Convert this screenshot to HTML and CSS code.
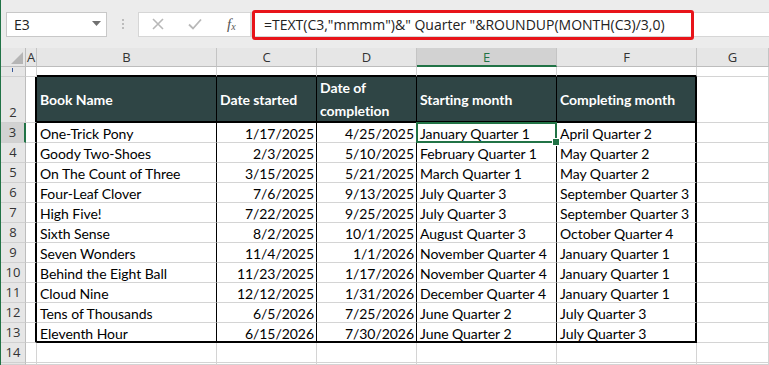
FILE: index.html
```html
<!DOCTYPE html>
<html>
<head>
<meta charset="utf-8">
<link rel="stylesheet" href="styles.css">
</head>
<body>
<div class="page">
  <div class="toolbar">
    <div class="namebox"><span class="nb-text">E3</span><svg class="nb-arrow" width="9" height="5" viewBox="0 0 9 5"><path d="M0 0h9L4.5 5z" fill="#707070"/></svg></div>
    <div class="dots"><span></span><span></span><span></span></div>
    <div class="fxbox">
      <svg class="ico" width="12" height="12" viewBox="0 0 12 12"><path d="M1 1l10 10M11 1L1 11" stroke="#b8b8b8" stroke-width="1.6" fill="none"/></svg>
      <svg class="ico" width="14" height="12" viewBox="0 0 14 12"><path d="M1 6.5l4 4L13 1.5" stroke="#b8b8b8" stroke-width="1.8" fill="none"/></svg>
      <span class="fx">f<sub>x</sub></span>
    </div>
    <div class="formula"><div class="redbox">=TEXT(C3,"mmmm")&amp;" Quarter "&amp;ROUNDUP(MONTH(C3)/3,0)</div></div>
  </div>
  <div class="sheet">
    <div class="corner"><svg width="12" height="12" viewBox="0 0 12 12"><path d="M12 0V12H0z" fill="#b5b5b5"/></svg></div>
    <div class="ch">A</div><div class="ch">B</div><div class="ch">C</div><div class="ch">D</div><div class="ch sel">E</div><div class="ch">F</div><div class="ch">G</div>

    <div class="rh r1"><span class="tick"></span></div><div class="c"></div><div class="c tt"></div><div class="c tt"></div><div class="c tt"></div><div class="c tt"></div><div class="c tt"></div><div class="c"></div>

    <div class="rh">2</div><div class="c tl"></div><div class="c hd">Book Name</div><div class="c hd">Date started</div><div class="c hd wrap">Date of completion</div><div class="c hd">Starting month</div><div class="c hd last">Completing month</div><div class="c"></div>

    <div class="rh rsel">3</div><div class="c tl"></div><div class="c d">One-Trick Pony</div><div class="c d num">1/17/2025</div><div class="c d num">4/25/2025</div><div class="c d active">January Quarter 1</div><div class="c d last">April Quarter 2</div><div class="c"></div>
    <div class="rh">4</div><div class="c tl"></div><div class="c d">Goody Two-Shoes</div><div class="c d num">2/3/2025</div><div class="c d num">5/10/2025</div><div class="c d">February Quarter 1</div><div class="c d last">May Quarter 2</div><div class="c"></div>
    <div class="rh">5</div><div class="c tl"></div><div class="c d">On The Count of Three</div><div class="c d num">3/15/2025</div><div class="c d num">5/21/2025</div><div class="c d">March Quarter 1</div><div class="c d last">May Quarter 2</div><div class="c"></div>
    <div class="rh">6</div><div class="c tl"></div><div class="c d">Four-Leaf Clover</div><div class="c d num">7/6/2025</div><div class="c d num">9/13/2025</div><div class="c d">July Quarter 3</div><div class="c d last">September Quarter 3</div><div class="c"></div>
    <div class="rh">7</div><div class="c tl"></div><div class="c d">High Five!</div><div class="c d num">7/22/2025</div><div class="c d num">9/25/2025</div><div class="c d">July Quarter 3</div><div class="c d last">September Quarter 3</div><div class="c"></div>
    <div class="rh">8</div><div class="c tl"></div><div class="c d">Sixth Sense</div><div class="c d num">8/2/2025</div><div class="c d num">10/1/2025</div><div class="c d">August Quarter 3</div><div class="c d last">October Quarter 4</div><div class="c"></div>
    <div class="rh">9</div><div class="c tl"></div><div class="c d">Seven Wonders</div><div class="c d num">11/4/2025</div><div class="c d num">1/1/2026</div><div class="c d">November Quarter 4</div><div class="c d last">January Quarter 1</div><div class="c"></div>
    <div class="rh">10</div><div class="c tl"></div><div class="c d">Behind the Eight Ball</div><div class="c d num">11/23/2025</div><div class="c d num">1/17/2026</div><div class="c d">November Quarter 4</div><div class="c d last">January Quarter 1</div><div class="c"></div>
    <div class="rh">11</div><div class="c tl"></div><div class="c d">Cloud Nine</div><div class="c d num">12/12/2025</div><div class="c d num">1/31/2026</div><div class="c d">December Quarter 4</div><div class="c d last">January Quarter 1</div><div class="c"></div>
    <div class="rh">12</div><div class="c tl"></div><div class="c d">Tens of Thousands</div><div class="c d num">6/5/2026</div><div class="c d num">7/25/2026</div><div class="c d">June Quarter 2</div><div class="c d last">July Quarter 3</div><div class="c"></div>
    <div class="rh">13</div><div class="c tl"></div><div class="c d bt">Eleventh Hour</div><div class="c d bt num">6/15/2026</div><div class="c d bt num">7/30/2026</div><div class="c d bt">June Quarter 2</div><div class="c d bt last">July Quarter 3</div><div class="c"></div>
    <div class="rh">14</div><div class="c"></div><div class="c"></div><div class="c"></div><div class="c"></div><div class="c"></div><div class="c"></div><div class="c"></div>
    <div class="rh"></div><div class="c"></div><div class="c"></div><div class="c"></div><div class="c"></div><div class="c"></div><div class="c"></div><div class="c"></div>
  </div>
</div>
</body>
</html>
```

FILE: styles.css
```css
* { box-sizing: border-box; }
html, body { margin: 0; padding: 0; }
body { width: 769px; height: 365px; overflow: hidden; background: #fff; }
.page { border-left: 1px solid #217346; height: 365px; overflow: hidden; }

.toolbar {
  height: 48px;
  background: #ececec;
  display: flex;
  align-items: center;
  padding: 0 0 0 5px;
  font-family: "Open Sans", "Noto Sans", sans-serif;
}
.namebox {
  width: 101px; height: 25px;
  background: #fff;
  border: 1px solid #c8c8c8;
  display: flex; align-items: center; justify-content: space-between;
  padding: 0 5px 0 7px;
  font-size: 14px; color: #222;
}
.nb-arrow { margin-top: -2px; }
.dots {
  width: 31px; height: 25px;
  display: flex; flex-direction: column; align-items: center; justify-content: center; gap: 2px;
}
.dots span { width: 2px; height: 2px; background: #bcbcbc; display: block; }
.fxbox {
  width: 113px; height: 25px;
  background: #fff;
  border: 1px solid #d6d6d6;
  display: flex; align-items: center;
  padding: 0 0 0 13px;
  gap: 24px;
}
.ico { display: block; }
.fx {
  font-family: "Liberation Serif", serif; font-style: italic;
  font-size: 15px; color: #555; margin-left: 1px;
}
.fx sub { font-size: 10px; vertical-align: baseline; position: relative; top: 1px; }
.formula {
  flex: 1; height: 25px;
  background: #fff;
  border: 1px solid #d6d6d6;
  border-right: 0;
  display: flex; align-items: center;
}
.redbox {
  width: 442px; height: 30px;
  margin: 1px 0 0 0;
  border: 3px solid #e8141a;
  border-radius: 3px;
  padding: 0 0 0 9px;
  font-size: 14px; line-height: 24px; color: #222;
  white-space: nowrap;
}

.sheet {
  display: grid;
  grid-template-columns: 25px 11px 180px 100px 100px 140px 140px 1fr;
  grid-template-rows: 19px 10px 46px repeat(12, 20px);
  font-family: Lato, "Liberation Sans", sans-serif;
  font-size: 14px;
  letter-spacing: -0.05px;
  color: #000;
}
.corner {
  background: #e6e6e6;
  border-right: 1px solid #bdbdbd; border-bottom: 1px solid #bdbdbd;
  display: flex; align-items: flex-end; justify-content: flex-end;
  padding: 0 2px 2px 0;
}
.corner svg { display: block; }
.ch {
  background: #e6e6e6;
  border-right: 1px solid #c4c4c4; border-bottom: 1px solid #bdbdbd;
  text-align: center; line-height: 18px; color: #333;
  font-family: "Open Sans", "Noto Sans", sans-serif; font-size: 13px;
  letter-spacing: 0;
  overflow: hidden;
}
.ch.sel { background: #d2d2d2; color: #217346; border-bottom: 2px solid #217346; }
.rh {
  background: #e6e6e6;
  border-right: 1px solid #bdbdbd; border-bottom: 1px solid #d0d0d0;
  display: flex; align-items: flex-end; justify-content: center;
  line-height: 19px; color: #333;
  font-family: "Open Sans", "Noto Sans", sans-serif; font-size: 13px;
  letter-spacing: 0;
  overflow: hidden;
}
.rh.r1 { align-items: flex-start; padding-top: 1px; }
.rh.r1 .tick { display: block; width: 1px; height: 4px; background: #3a5a9a; margin-left: -1px; }
.rh.rsel { background: #d2d2d2; border-right: 2px solid #217346; }

.c {
  border-right: 1px solid #d4d4d4; border-bottom: 1px solid #d4d4d4;
  white-space: nowrap; overflow: hidden;
  line-height: 19px; padding: 1px 3px 0 3px;
}
.c.tt { border-bottom: 2px solid #000; }
.c.tl { border-right: 2px solid #000; }
.c.hd {
  background: #2f4545; color: #fff; font-weight: bold;
  border-right: 1px solid #000; border-bottom: 2px solid #000;
  display: flex; align-items: center; line-height: 23px;
  padding-top: 0;
}
.c.hd.wrap { white-space: normal; padding-right: 20px; }
.c.d { border-right: 1px solid #000; }
.c.last { border-right: 2px solid #000; }
.c.bt { border-bottom: 2px solid #000; }
.c.num { text-align: right; padding-right: 2px; }
.c.active { position: relative; overflow: visible; }
.c.active::after {
  content: ""; position: absolute;
  left: -1px; top: -1px; right: -1px; bottom: -1px;
  border: 2px solid #217346;
}
.c.active::before {
  content: ""; position: absolute;
  right: -4px; bottom: -4px; width: 6px; height: 6px;
  background: #217346; border: 1px solid #fff; z-index: 2;
}
```
